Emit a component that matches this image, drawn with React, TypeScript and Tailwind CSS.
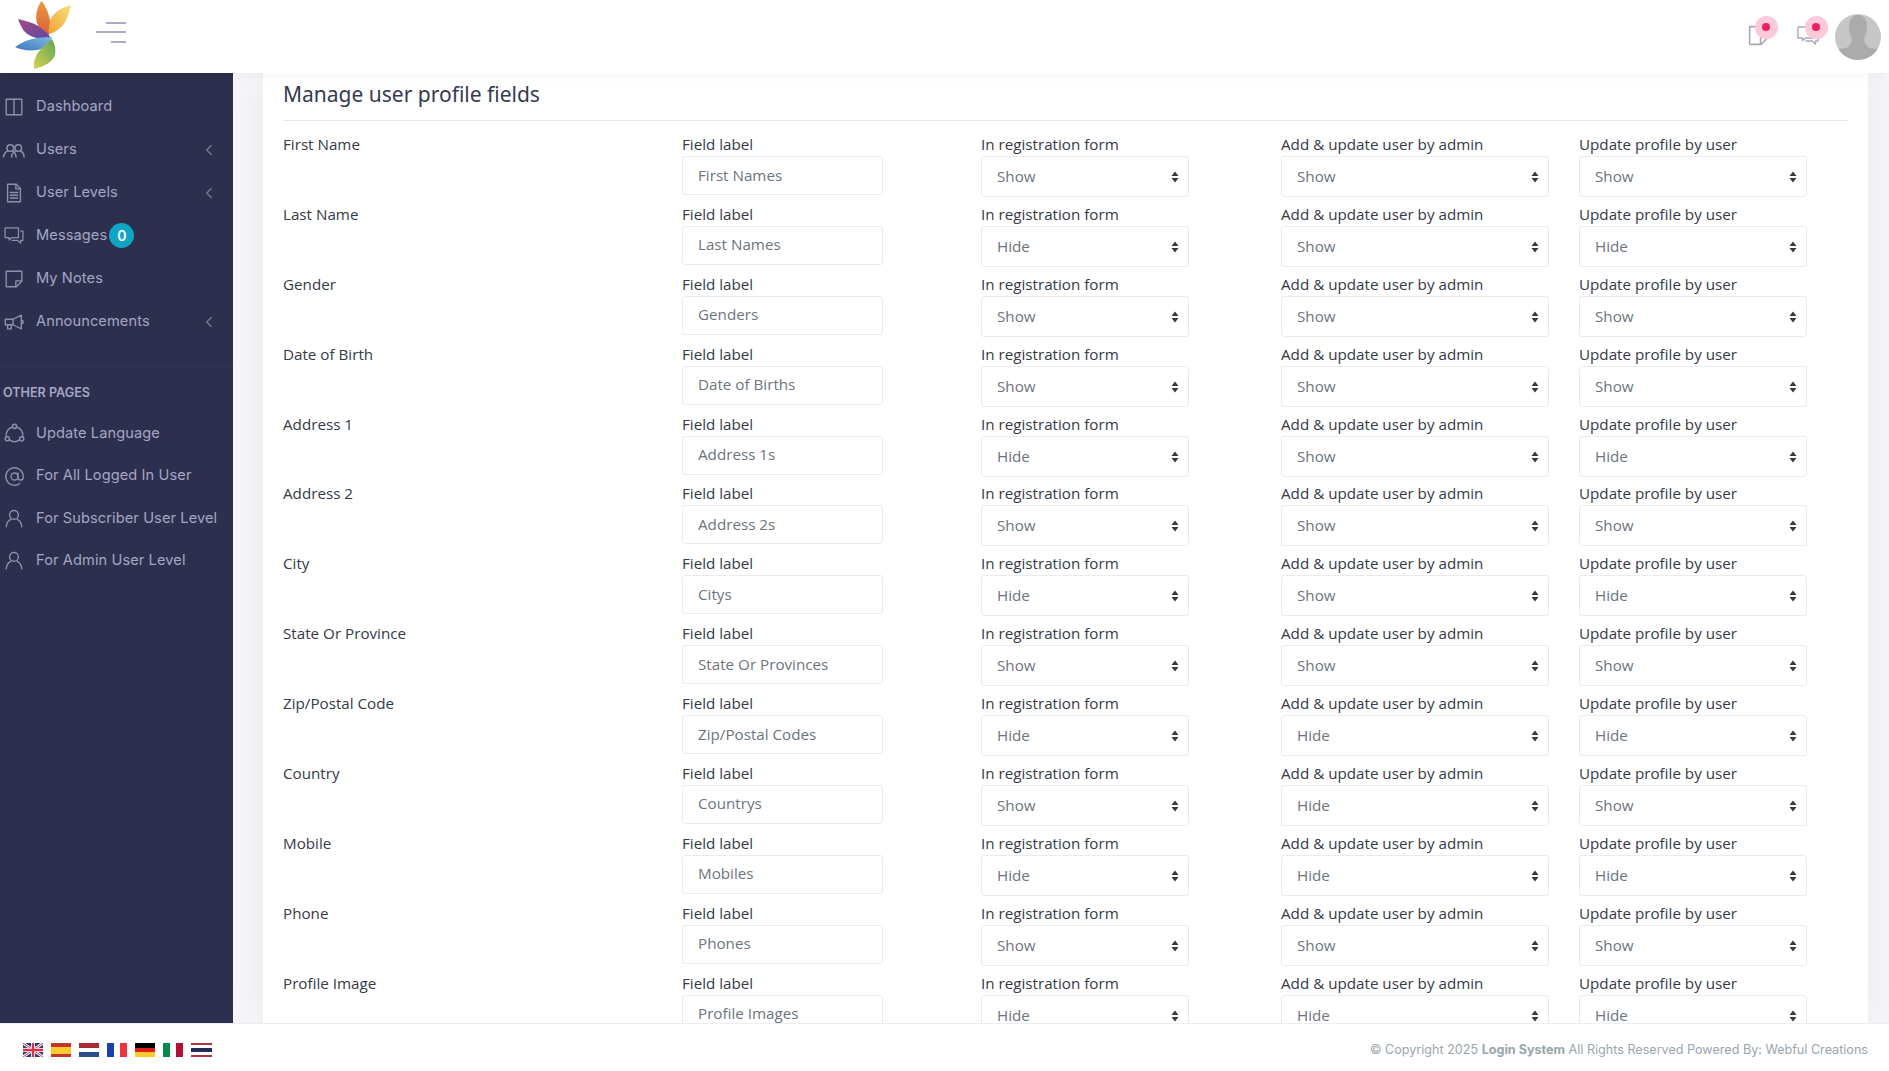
import React from "react";
import { ChevronLeft, AtSign } from "lucide-react";

const rows: [string, string, string, string, string][] = [
  ["First Name", "First Names", "Show", "Show", "Show"],
  ["Last Name", "Last Names", "Hide", "Show", "Hide"],
  ["Gender", "Genders", "Show", "Show", "Show"],
  ["Date of Birth", "Date of Births", "Show", "Show", "Show"],
  ["Address 1", "Address 1s", "Hide", "Show", "Hide"],
  ["Address 2", "Address 2s", "Show", "Show", "Show"],
  ["City", "Citys", "Hide", "Show", "Hide"],
  ["State Or Province", "State Or Provinces", "Show", "Show", "Show"],
  ["Zip/Postal Code", "Zip/Postal Codes", "Hide", "Hide", "Hide"],
  ["Country", "Countrys", "Show", "Hide", "Show"],
  ["Mobile", "Mobiles", "Hide", "Hide", "Hide"],
  ["Phone", "Phones", "Show", "Show", "Show"],
  ["Profile Image", "Profile Images", "Hide", "Hide", "Hide"],
];

const S = (p: { children: React.ReactNode; className?: string }) => (
  <svg viewBox="0 0 24 24" fill="none" stroke="currentColor" strokeWidth={1.5} strokeLinecap="round" strokeLinejoin="round" className={p.className ?? "w-[22px] h-[22px]"}>
    {p.children}
  </svg>
);

const IconColumns = () => (
  <S><rect x="3.5" y="3.5" width="17" height="17" /><path d="M12 3.5v17" /></S>
);
const IconUsers = () => (
  <S className="w-[24px] h-[24px]">
    <circle cx="8.3" cy="10" r="3.300" /><circle cx="16.300" cy="10" r="3.300" />
    <path d="M1.500 19c.3-3 2-5 4.500-6.300M10.500 12.700c2 1.300 3.300 3.300 3.600 6.300" />
    <path d="M9.500 19c.3-3 2-5 4.500-6.300M18.500 12.700c2 1.300 3.300 3.300 3.600 6.300" />
  </S>
);
const IconDoc = () => (
  <S>
    <path d="M5 2.500h9.500L19 7v14.500H5z" /><path d="M14 2.500V7.500h5" /><path d="M8 11.500h8M8 14.500h8M8 17.500h8" />
  </S>
);
const IconNote = ({ className }: { className?: string }) => (
  <S className={className}>
    <path d="M20.500 3.500h-17v17h11l6-6z" /><path d="M20.500 14h-6.500v6.500" />
  </S>
);
const IconChat = ({ className }: { className?: string }) => (
  <svg viewBox="0 0 22 19" fill="none" stroke="currentColor" strokeWidth={1.4} strokeLinecap="round" strokeLinejoin="round" className={className}>
    <path d="M1 1h15v11H8.500L5.500 14.500V12H1z" />
    <path d="M18.500 4.500H21V15h-2.500v3l-3.500-3H9" />
  </svg>
);
const IconMegaphone = () => (
  <S>
    <path d="M2.500 9H11l9-4.500v15L11 15H2.500z" />
    <path d="M11 9v6M5 15v4.500h4V15" />
    <path d="M20 10c1.500 0 2 1 2 2s-.5 2-2 2" />
  </S>
);
const IconShare = () => (
  <S className="w-[23px] h-[23px]">
    <circle cx="12" cy="4.500" r="2.200" /><circle cx="4.500" cy="17.500" r="2.200" /><circle cx="19.500" cy="17.500" r="2.200" />
    <path d="M9.900 5.200A9 9 0 0 0 3.300 15.400M14.100 5.200a9 9 0 0 1 6.600 10.200M6.700 18.600a9 9 0 0 0 10.600 0" />
  </S>
);
const IconUser = () => (
  <S>
    <circle cx="12" cy="7.500" r="4.800" /><path d="M3.500 20.500c.5-4.300 3-7 5-8M15.500 12.500c2 1 4.500 3.700 5 8" />
  </S>
);

function NavRow({ icon, label, chevron, badge, tall }: { icon: React.ReactNode; label: string; chevron?: boolean; badge?: boolean; tall?: boolean }) {
  return (
    <div className={tall ? "h-[43px] flex items-center text-[#a6a5c6]" : "h-[42.4px] flex items-center text-[#a6a5c6]"}>
      <div className="w-[36px] pl-[1px] pr-[9px] flex justify-center text-[#8d8fad] shrink-0">{icon}</div>
      <span className="text-[14.6px] tracking-[0.1px] font-normal">{label}</span>
      {badge && (
        <span className="ml-[2px] w-[25px] h-[25px] rounded-full bg-[#10a5c4] text-white text-[14px] font-semibold flex items-center justify-center">0</span>
      )}
      {chevron && <ChevronLeft className="ml-auto mr-[15px] text-[#74758f]" size={18} strokeWidth={2} />}
    </div>
  );
}

function Field({ value }: { value: string }) {
  return (
    <div className="relative">
      <select
        defaultValue={value}
        className="block w-full h-[41px] appearance-none bg-white border border-[#e9ecef] rounded-[3px] pl-[15px] text-[15.2px] text-[#6c757d] outline-none"
      >
        <option>Show</option>
        <option>Hide</option>
      </select>
      <svg viewBox="0 0 8 12" className="absolute right-[10px] top-[15px] w-[8px] h-[12px]" fill="#343a40">
        <path d="M4 0.500 7.500 5H.5zM4 11.500.5 7h7z" />
      </svg>
    </div>
  );
}

const Label = ({ children }: { children: React.ReactNode }) => (
  <div className="h-[22px] leading-[20px] text-[15.2px] text-[#343a46] whitespace-nowrap">{children}</div>
);

function Flags() {
  const box = "w-[20px] h-[14px] shrink-0 flex flex-col";
  return (
    <div className="flex items-center ml-[23px] gap-[8px]">
      <svg viewBox="0 0 60 42" className="w-[20px] h-[14px] shrink-0">
        <rect width="60" height="42" fill="#2b3a78" />
        <path d="M0 0 60 42M60 0 0 42" stroke="#fff" strokeWidth="8" />
        <path d="M0 0 60 42M60 0 0 42" stroke="#d8324a" strokeWidth="3" />
        <path d="M30 0v42M0 21h60" stroke="#fff" strokeWidth="12" />
        <path d="M30 0v42M0 21h60" stroke="#d8324a" strokeWidth="7" />
      </svg>
      <div className={box}>
        <div className="h-[3.5px] bg-[#c6332a]" /><div className="h-[7px] bg-[#f8cb2e]" /><div className="h-[3.5px] bg-[#c6332a]" />
      </div>
      <div className={box}>
        <div className="flex-1 bg-[#a72c35]" /><div className="flex-1 bg-white" /><div className="flex-1 bg-[#2f4e8f]" />
      </div>
      <div className="w-[20px] h-[14px] shrink-0 flex">
        <div className="flex-1 bg-[#1c3faa]" /><div className="flex-1 bg-white" /><div className="flex-1 bg-[#ef3340]" />
      </div>
      <div className={box}>
        <div className="flex-1 bg-black" /><div className="flex-1 bg-[#dd1c1c]" /><div className="flex-1 bg-[#f8cb2e]" />
      </div>
      <div className="w-[20px] h-[14px] shrink-0 flex">
        <div className="flex-1 bg-[#0a8a4a]" /><div className="flex-1 bg-white" /><div className="flex-1 bg-[#b01235]" />
      </div>
      <div className="w-[21px] h-[14px] shrink-0 flex flex-col">
        <div className="h-[2.300px] bg-[#b5303f]" /><div className="h-[2.300px] bg-white" /><div className="h-[4.800px] bg-[#232b5c]" /><div className="h-[2.300px] bg-white" /><div className="h-[2.300px] bg-[#b5303f]" />
      </div>
    </div>
  );
}

function Logo() {
  return (
    <svg viewBox="0 0 80 73" className="w-[80px] h-[73px] shrink-0">
      <defs>
        <linearGradient id="a" x1="0" y1="0" x2="0" y2="1"><stop offset="0" stopColor="#e89a3c" /><stop offset="1" stopColor="#de5f3a" /></linearGradient>
        <linearGradient id="b" x1="1" y1="0" x2="0" y2="1"><stop offset="0" stopColor="#f7e27a" /><stop offset="1" stopColor="#eda135" /></linearGradient>
        <linearGradient id="c" x1="0" y1="0" x2="1" y2="1"><stop offset="0" stopColor="#a3497f" /><stop offset="1" stopColor="#5b4aa8" /></linearGradient>
        <linearGradient id="d" x1="0" y1="1" x2="1" y2="0"><stop offset="0" stopColor="#3f78b8" /><stop offset="1" stopColor="#7fb8e6" /></linearGradient>
        <linearGradient id="e" x1="0" y1="1" x2="1" y2="0"><stop offset="0" stopColor="#d6d24e" /><stop offset="1" stopColor="#5fa65a" /></linearGradient>
      </defs>
      <path d="M41.500 1C35 9 35 22 39 27c3 3 7 6 10 8 2-7 2-15-1-22-1-4-4-9-6.500-12z" fill="url(#a)" />
      <path d="M71 5C60 8 52 14 50 21c-1 5-2 10-1 13 8-2 15-8 18-16 2-4 3-9 4-13z" fill="url(#b)" />
      <path d="M18 19c3 8 6 14 13 17 6 3 13 3 20 2-4-6-11-12-19-15-5-2-10-3-14-4z" fill="url(#c)" />
      <path d="M15 47c7-5 14-8 22-9 5-1 11-1 15-1-2 6-8 12-15 13-8 1-16 0-22-3z" fill="url(#d)" />
      <path d="M34 69c-1-8 2-15 7-20 4-4 8-8 11-10 3 5 4 11 3 16-2 7-12 12-21 14z" fill="url(#e)" />
    </svg>
  );
}

function Avatar() {
  return (
    <div className="w-[46px] h-[46px] rounded-full overflow-hidden shrink-0">
      <svg viewBox="0 0 46 46" className="w-full h-full">
        <rect width="46" height="46" fill="#c6c6c6" />
        <path d="M23 1c6 0 9 5 9 12 0 5-2 9-3 12 0 3 2 6 5 9l-11 6-11-6c3-3 5-6 5-9-1-3-3-7-3-12 0-7 3-12 9-12z" fill="#ababab" />
        <path d="M0 36c8-2 15-3 23-3s15 1 23 3v10H0z" fill="#ababab" />
      </svg>
    </div>
  );
}

function Pulse({ className }: { className: string }) {
  return (
    <div className={className}>
      <div className="w-[8px] h-[8px] rounded-full bg-[#f21d5e]" />
    </div>
  );
}

export default function App() {
  return (
    <div className="h-screen flex flex-col overflow-hidden bg-white font-['Open_Sans',sans-serif]">
      <header className="relative z-10 h-[73px] shrink-0 bg-white flex items-center shadow-[0_0_15px_rgba(0,0,0,0.05)]">
        <Logo />
        <div className="ml-[16px] -mt-[9px] w-[30px] flex flex-col items-end gap-[7.500px]">
          <div className="h-[2px] w-[20px] bg-[#aeaac4]" />
          <div className="h-[2px] w-[30px] bg-[#aeaac4]" />
          <div className="h-[2px] w-[15px] bg-[#aeaac4]" />
        </div>
        <div className="ml-auto flex items-start self-start mr-[8px]">
          <div className="relative mt-[26px] w-[18px] h-[17px] text-[#a9a6be]">
            <IconNote className="w-[25px] h-[25px] -ml-[3.500px] -mt-[3.500px]" />
            <Pulse className="absolute left-[5.500px] -top-[10.500px] w-[23px] h-[23px] rounded-full bg-[#fcc9d9] flex items-center justify-center" />
          </div>
          <div className="relative mt-[26px] ml-[30px] w-[22px] h-[19px] text-[#a9a6be]">
            <IconChat className="w-[22px] h-[19px]" />
            <Pulse className="absolute left-[7.500px] -top-[10.500px] w-[23px] h-[23px] rounded-full bg-[#fcc9d9] flex items-center justify-center" />
          </div>
          <div className="ml-[16px] mt-[14px]"><Avatar /></div>
        </div>
      </header>
      <div className="flex-1 flex min-h-0">
        <aside className="w-[233px] shrink-0 bg-[#2c304e] font-['Inter',sans-serif]">
          <div className="pt-[12px] pb-[22.900px] border-b border-[#31355a]">
            <NavRow tall icon={<IconColumns />} label="Dashboard" />
            <NavRow tall icon={<IconUsers />} label="Users" chevron />
            <NavRow tall icon={<IconDoc />} label="User Levels" chevron />
            <NavRow tall icon={<IconChat className="w-[20px] h-[17px]" />} label="Messages" badge />
            <NavRow tall icon={<IconNote />} label="My Notes" />
            <NavRow tall icon={<IconMegaphone />} label="Announcements" chevron />
          </div>
          <div className="pl-[3px] pt-[17px] h-[45.700px] text-[12.600px] font-semibold text-[#a6a5c6] uppercase">Other Pages</div>
          <div>
            <NavRow icon={<IconShare />} label="Update Language" />
            <NavRow icon={<AtSign size={21} strokeWidth={1.5} />} label="For All Logged In User" />
            <NavRow icon={<IconUser />} label="For Subscriber User Level" />
            <NavRow icon={<IconUser />} label="For Admin User Level" />
          </div>
        </aside>
        <main className="flex-1 min-w-0 bg-[#f6f6f9] pl-[30px] pr-[21px] overflow-hidden">
          <div className="bg-white px-[20px] h-full shadow-[0_0_35px_rgba(154,161,171,0.15)]">
            <h1 className="pt-[6px] pb-[10px] h-[48px] leading-[30px] text-[21px] text-[#343a50] border-b border-[#e6e7ea] font-['Noto_Sans',sans-serif]">
              Manage user profile fields
            </h1>
            <div className="pt-[13px]">
              {rows.map((r) => (
                <div key={r[0]} className="grid grid-cols-[399px_299px_300px_298px_228px] h-[69.880px]">
                  <Label>{r[0]}</Label>
                  <div className="w-[201px]">
                    <Label>Field label</Label>
                    <input
                      defaultValue={r[1]}
                      className="block w-full h-[39px] bg-white border border-[#e9ecef] rounded-[3px] pl-[15px] pb-[2px] text-[15.200px] text-[#6c757d] outline-none"
                    />
                  </div>
                  <div className="w-[208px]">
                    <Label>In registration form</Label>
                    <Field value={r[2]} />
                  </div>
                  <div className="w-[268px]">
                    <Label>Add &amp; update user by admin</Label>
                    <Field value={r[3]} />
                  </div>
                  <div className="w-[228px]">
                    <Label>Update profile by user</Label>
                    <Field value={r[4]} />
                  </div>
                </div>
              ))}
            </div>
          </div>
        </main>
      </div>
      <footer className="relative z-10 h-[48px] pt-[5px] shrink-0 bg-white border-t border-[#eeeef2] flex items-center justify-between pr-[21px] font-['Inter',sans-serif]">
        <Flags />
        <div className="text-[12.600px] text-[#98a6ad]">
          © Copyright 2025 <b className="font-bold">Login System</b> All Rights Reserved Powered By: Webful Creations
        </div>
      </footer>
    </div>
  );
}
